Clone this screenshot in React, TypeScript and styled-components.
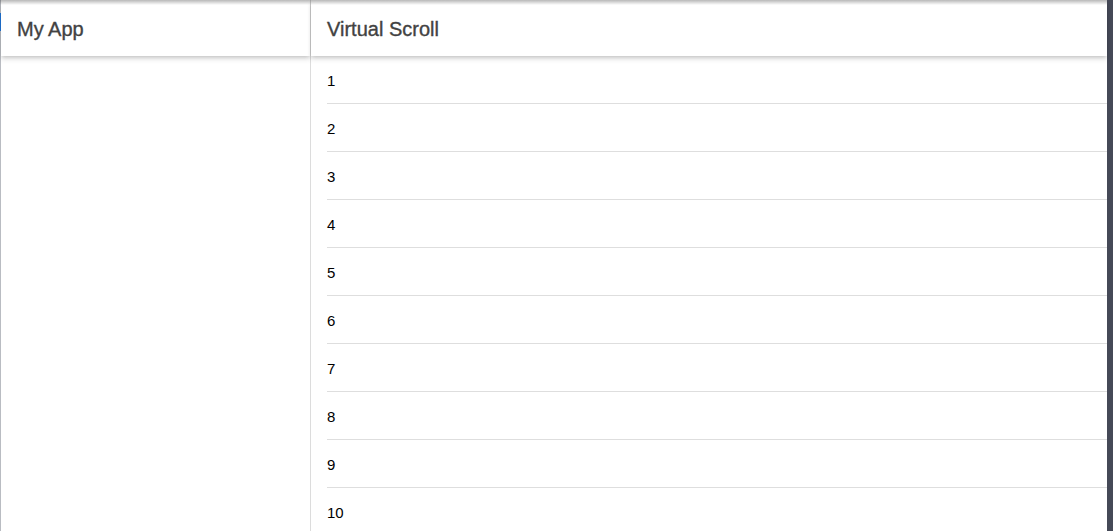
import styled, { createGlobalStyle } from "styled-components";

const GlobalStyle = createGlobalStyle`
  html, body {
    margin: 0;
    padding: 0;
    height: 100%;
    overflow: hidden;
    background: #fff;
  }
  #root {
    height: 100%;
  }
  * {
    box-sizing: border-box;
  }
`;

const Shell = styled.div`
  position: relative;
  display: flex;
  height: 100vh;
  font-family: "Liberation Sans", Arial, sans-serif;
`;

// thin edge on the far left with the small blue marker
const LeftEdge = styled.div`
  position: relative;
  width: 1px;
  background: #b9bcc2;

  &::before {
    content: "";
    position: absolute;
    top: 13px;
    left: 0;
    width: 2px;
    height: 18px;
    background: #1f73d4;
  }
`;

const Pane = styled.div<{ $menu?: boolean }>`
  display: flex;
  flex-direction: column;
  ${(p) => (p.$menu ? "width: 310px; border-right: 1px solid #dcdcdc;" : "flex: 1; min-width: 0;")}
`;

const Toolbar = styled.header`
  position: relative;
  z-index: 2;
  flex: 0 0 56px;
  display: flex;
  align-items: center;
  padding: 3px 16px 0;
  background: #fff;
  box-shadow: 0 2px 4px -1px rgba(0, 0, 0, 0.2), 0 4px 5px 0 rgba(0, 0, 0, 0.08);
`;

const Title = styled.h1`
  margin: 0;
  font-size: 20px;
  font-weight: 400;
  color: #424242;
  -webkit-text-stroke: 0.35px #424242;
`;

const List = styled.div`
  flex: 1;
  overflow: hidden;
`;

const Row = styled.div`
  margin-left: 16px;
  height: 48px;
  display: flex;
  align-items: center;
  padding-top: 1px;
  border-bottom: 1px solid #dedede;
  font-size: 15px;
  color: #000;
`;

const Scrollbar = styled.div`
  width: 6px;
  background: #454957;
`;

const TopShade = styled.div`
  position: absolute;
  top: 0;
  left: 0;
  right: 6px;
  height: 5px;
  z-index: 3;
  pointer-events: none;
  background: linear-gradient(rgba(0, 0, 0, 0.28), rgba(0, 0, 0, 0));
`;

export default function App() {
  const items = Array.from({ length: 10 }, (_, i) => i + 1);

  return (
    <>
      <GlobalStyle />
      <Shell>
        <TopShade />
        <LeftEdge />
        <Pane $menu>
          <Toolbar>
            <Title>My App</Title>
          </Toolbar>
          <List />
        </Pane>
        <Pane>
          <Toolbar>
            <Title>Virtual Scroll</Title>
          </Toolbar>
          <List>
            {items.map((n) => (
              <Row key={n}>{n}</Row>
            ))}
          </List>
        </Pane>
        <Scrollbar />
      </Shell>
    </>
  );
}
